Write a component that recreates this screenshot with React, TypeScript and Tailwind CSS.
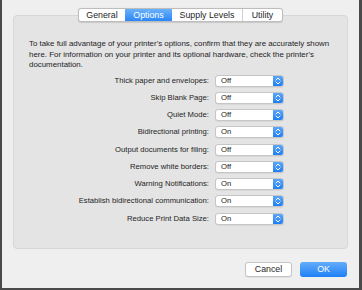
import React from "react";

const rows: [string, string][] = [
  ["Thick paper and envelopes:", "Off"],
  ["Skip Blank Page:", "Off"],
  ["Quiet Mode:", "Off"],
  ["Bidirectional printing:", "On"],
  ["Output documents for filing:", "Off"],
  ["Remove white borders:", "Off"],
  ["Warning Notifications:", "On"],
  ["Establish bidirectional communication:", "On"],
  ["Reduce Print Data Size:", "On"],
];

function Chevrons() {
  return (
    <svg width="6" height="8" viewBox="0 0 6 8" fill="none">
      <path d="M1 3 L3 1 L5 3" stroke="white" strokeWidth="1" strokeLinecap="round" strokeLinejoin="round" />
      <path d="M1 5 L3 7 L5 5" stroke="white" strokeWidth="1" strokeLinecap="round" strokeLinejoin="round" />
    </svg>
  );
}

function Popup({ value }: { value: string }) {
  return (
    <div className="flex h-[12px] w-[69px] items-stretch overflow-hidden rounded-[3px] border border-[#c6c6c6] bg-white shadow-[0_0.5px_0.5px_rgba(0,0,0,0.1)]">
      <div className="flex flex-1 items-center pl-[5px] text-[7.7px] leading-none text-[#222]">{value}</div>
      <div className="flex w-[10px] items-center justify-center bg-gradient-to-b from-[#5aa6fa] to-[#1c7ff6]">
        <Chevrons />
      </div>
    </div>
  );
}

export default function App() {
  const tabs = [
    { name: "General", w: "w-[46px]", active: false },
    { name: "Options", w: "w-[47px]", active: true },
    { name: "Supply Levels", w: "w-[70px]", active: false },
    { name: "Utility", w: "w-[40px]", active: false },
  ];
  return (
    <div
      className="flex h-[290px] w-[362px] flex-col border-b-[2px] border-l-[2px] border-r-[3px] border-[#4a4a4a] bg-[#efefef] text-[#1e1e1e]"
      style={{ fontFamily: '"Liberation Sans", Arial, sans-serif' }}
    >
      <div className="mx-[11px] mt-[8px] flex flex-col">
        <div className="relative z-10 -mb-[7px] flex justify-center">
          <div className="flex h-[14px] overflow-hidden rounded-[3px] border border-[#bdbdbd] bg-white shadow-[0_0.5px_1px_rgba(0,0,0,0.12)]">
            {tabs.map((t, i) => (
              <div
                key={t.name}
                className={`flex items-center justify-center text-[8.8px] leading-none ${t.w} ${
                  t.active
                    ? "bg-gradient-to-b from-[#69b1fa] to-[#2a86f6] text-white"
                    : "text-[#1e1e1e]"
                } ${i > 0 && !t.active && !tabs[i - 1].active ? "border-l border-[#cfcfcf]" : ""}`}
              >
                {t.name}
              </div>
            ))}
          </div>
        </div>
        <div className="flex h-[234px] flex-col rounded-[4px] border border-[#d7d7d7] bg-[#e4e4e4] pl-[15px] pr-[12px] pt-[23px]">
          <p className="text-[7.9px] leading-[10.5px] text-[#1e1e1e]">
            To take full advantage of your printer's options, confirm that they are accurately shown here. For
            information on your printer and its optional hardware, check the printer's documentation.
          </p>
          <div className="mt-[4px] flex flex-col gap-[5.25px]">
            {rows.map(([label, value]) => (
              <div key={label} className="flex h-[12px] items-center">
                <div className="w-[181px] pr-[1px] text-right text-[7.7px] leading-none text-[#1e1e1e]">{label}</div>
                <div className="ml-[5px]">
                  <Popup value={value} />
                </div>
              </div>
            ))}
          </div>
        </div>
      </div>
      <div className="mr-[12px] mt-[13px] flex justify-end gap-[8px]">
        <div className="flex h-[15px] w-[47px] items-center justify-center rounded-[3px] border border-[#c4c4c4] bg-white text-[8.8px] leading-none text-[#1e1e1e] shadow-[0_0.5px_0.5px_rgba(0,0,0,0.12)]">
          Cancel
        </div>
        <div className="flex h-[15px] w-[47px] items-center justify-center rounded-[3px] bg-gradient-to-b from-[#62acfa] to-[#1a7ff6] text-[8.8px] leading-none text-white">
          OK
        </div>
      </div>
    </div>
  );
}
